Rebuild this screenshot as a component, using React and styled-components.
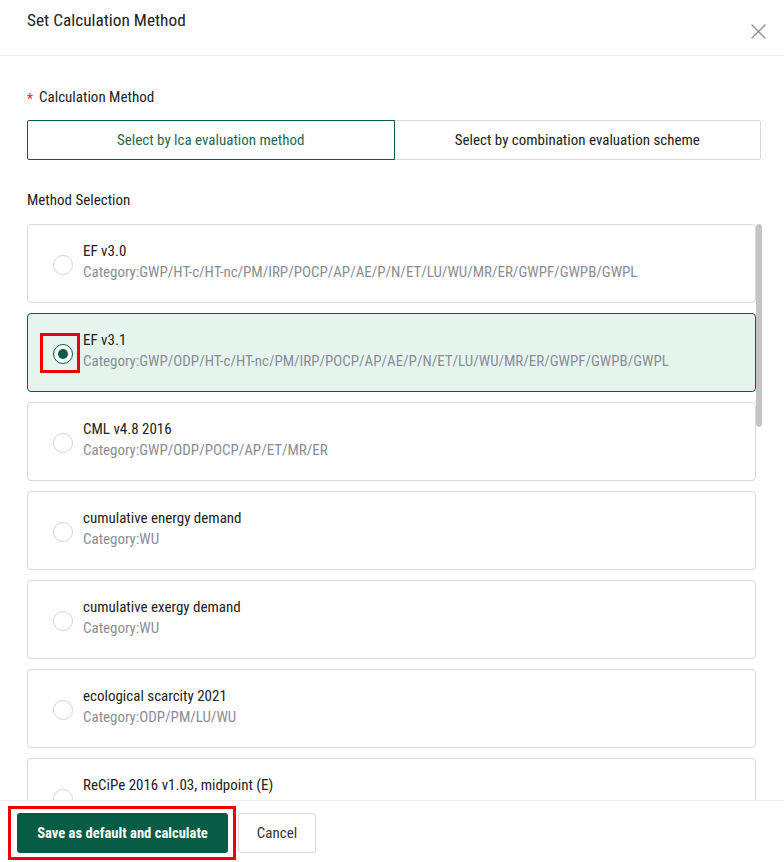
import React from "react";
import styled, { createGlobalStyle } from "styled-components";

const Global = createGlobalStyle`
  html, body { margin: 0; padding: 0; background: #fff; }
  body { font-family: "Roboto Condensed", Roboto, "Liberation Sans", sans-serif; font-stretch: 87.5%; color: #222; }
  * { box-sizing: border-box; }
`;

const Dialog = styled.div`
  width: 784px;
  height: 862px;
  display: flex;
  flex-direction: column;
  background: #fff;
  overflow: hidden;
`;

const Header = styled.div`
  height: 56px;
  flex: none;
  display: flex;
  align-items: flex-start;
  justify-content: space-between;
  padding: 8px 17px 0 27px;
  border-bottom: 1px solid #ececec;
`;

const Title = styled.h1`
  margin: 0;
  font-size: 17.3px;
  font-weight: 400;
  line-height: 24px;
  color: #222;
`;

const CloseBtn = styled.button`
  border: 0;
  background: none;
  padding: 0;
  margin-top: 14px;
  width: 18px;
  height: 18px;
  display: flex;
  align-items: center;
  justify-content: center;
  cursor: pointer;
`;

const Body = styled.div`
  flex: 1;
  min-height: 0;
  display: flex;
  flex-direction: column;
  padding: 30px 21px 0 27px;
`;

const Label = styled.div`
  font-size: 15px;
  line-height: 22px;
  display: flex;
  align-items: center;
  gap: 6px;
  color: #222;
`;

const Star = styled.span`
  color: #f5222d;
  font-size: 14px;
  line-height: 1;
  margin-top: 3px;
`;

const Tabs = styled.div`
  display: flex;
  margin-top: 12px;
  margin-right: 2px;
`;

const Tab = styled.button`
  flex: 1;
  height: 40px;
  padding-bottom: 2px;
  font-family: inherit;
  font-stretch: 87.5%;
  font-size: 15px;
  background: #fff;
  border: 1px solid ${p => (p.active ? "#0c5b44" : "#d9d9d9")};
  color: ${p => (p.active ? "#1e6b52" : "#222")};
  border-radius: ${p => (p.first ? "2px 0 0 2px" : "0 2px 2px 0")};
  margin-left: ${p => (p.first ? "0" : "-1px")};
  position: relative;
  z-index: ${p => (p.active ? 1 : 0)};
  cursor: pointer;
`;

const SectionLabel = styled.div`
  font-size: 15px;
  line-height: 22px;
  margin-top: 29px;
  margin-bottom: 13px;
  color: #222;
`;

const ListWrap = styled.div`
  position: relative;
  flex: 1;
  min-height: 0;
  display: flex;
`;

const List = styled.div`
  flex: 1;
  min-height: 0;
  overflow: hidden;
  display: flex;
  flex-direction: column;
  gap: 10px;
  padding-right: 7px;
`;

const Thumb = styled.div`
  position: absolute;
  top: 0;
  right: 1px;
  width: 6px;
  height: 203px;
  border-radius: 3px;
  background: #c4c4c7;
`;

const Card = styled.div`
  flex: none;
  display: flex;
  align-items: center;
  gap: 10px;
  padding: 15px 12px 19px 25px;
  border: 1px solid ${p => (p.selected ? "#0c5b44" : "#d9d9d9")};
  background: ${p => (p.selected ? "#e5f5ee" : "#fff")};
  border-radius: 4px;
  cursor: pointer;
`;

const RadioWrap = styled.div`
  position: relative;
  flex: none;
  width: 20px;
  height: 20px;
  margin-top: 6px;
`;

const RadioCircle = styled.span`
  display: flex;
  align-items: center;
  justify-content: center;
  width: 20px;
  height: 20px;
  border-radius: 50%;
  border: 1px solid ${p => (p.checked ? "#0c5b44" : "#d4d4d4")};
  background: #fff;
  &::after {
    content: "";
    display: ${p => (p.checked ? "block" : "none")};
    width: 10px;
    height: 10px;
    border-radius: 50%;
    background: #0c5b44;
  }
`;

const Highlight = styled.span`
  position: absolute;
  pointer-events: none;
  border: 3px solid #ee0000;
  left: ${p => p.l}px;
  top: ${p => p.t}px;
  right: ${p => p.r}px;
  bottom: ${p => p.b}px;
`;

const CardText = styled.div`
  display: flex;
  flex-direction: column;
  min-width: 0;
`;

const CardTitle = styled.div`
  font-size: 15px;
  line-height: 22px;
  color: #222;
`;

const CardCat = styled.div`
  font-size: 15px;
  line-height: 21px;
  color: #8a8d97;
  white-space: nowrap;
  letter-spacing: -0.03px;
`;

const Footer = styled.div`
  flex: none;
  height: 62px;
  border-top: 1px solid #ececec;
  display: flex;
  align-items: flex-start;
  gap: 10px;
  padding: 12px 17px 0;
`;

const PrimaryWrap = styled.div`
  position: relative;
`;

const Primary = styled.button`
  height: 40px;
  width: 211px;
  border: 0;
  border-radius: 3px;
  background: #075c45;
  color: #fff;
  font-family: inherit;
  font-stretch: 87.5%;
  font-size: 14.6px;
  font-weight: 700;
  cursor: pointer;
`;

const Secondary = styled.button`
  height: 40px;
  width: 78px;
  border: 1px solid #d9d9d9;
  border-radius: 3px;
  background: #fff;
  color: #333;
  font-family: inherit;
  font-stretch: 87.5%;
  font-size: 15px;
  cursor: pointer;
`;

const methods = [
  ["EF v3.0", "GWP/HT-c/HT-nc/PM/IRP/POCP/AP/AE/P/N/ET/LU/WU/MR/ER/GWPF/GWPB/GWPL"],
  ["EF v3.1", "GWP/ODP/HT-c/HT-nc/PM/IRP/POCP/AP/AE/P/N/ET/LU/WU/MR/ER/GWPF/GWPB/GWPL"],
  ["CML v4.8 2016", "GWP/ODP/POCP/AP/ET/MR/ER"],
  ["cumulative energy demand", "WU"],
  ["cumulative exergy demand", "WU"],
  ["ecological scarcity 2021", "ODP/PM/LU/WU"],
  ["ReCiPe 2016 v1.03, midpoint (E)", "GWP/ODP/HT-c/HT-nc/PM/IRP/POCP/AP/ET/LU/WU/MR/ER"],
  ["ReCiPe 2016 v1.03, midpoint (H)", "GWP/ODP/HT-c/HT-nc/PM/IRP/POCP/AP/ET/LU/WU/MR/ER"],
  ["ReCiPe 2016 v1.03, midpoint (I)", "GWP/ODP/HT-c/HT-nc/PM/IRP/POCP/AP/ET/LU/WU/MR/ER"],
];

const Close = () => (
  <svg width="15" height="15" viewBox="0 0 15 15" fill="none">
    <path d="M1 1L14 14M14 1L1 14" stroke="#8f8f8f" strokeWidth="1.4" strokeLinecap="round" />
  </svg>
);

export default function App() {
  const selected = 1;
  return (
    <Dialog>
      <Global />
      <Header>
        <Title>Set Calculation Method</Title>
        <CloseBtn aria-label="Close"><Close /></CloseBtn>
      </Header>
      <Body>
        <Label><Star>*</Star>Calculation Method</Label>
        <Tabs>
          <Tab first active>Select by lca evaluation method</Tab>
          <Tab>Select by combination evaluation scheme</Tab>
        </Tabs>
        <SectionLabel>Method Selection</SectionLabel>
        <ListWrap>
          <List>
            {methods.map(([name, cat], i) => (
              <Card key={name} selected={i === selected}>
                <RadioWrap>
                  <RadioCircle checked={i === selected} />
                  {i === selected && <Highlight l={-13} t={-11} r={-7} b={-9} />}
                </RadioWrap>
                <CardText>
                  <CardTitle>{name}</CardTitle>
                  <CardCat>Category:{cat}</CardCat>
                </CardText>
              </Card>
            ))}
          </List>
          <Thumb />
        </ListWrap>
      </Body>
      <Footer>
        <PrimaryWrap>
          <Primary>Save as default and calculate</Primary>
          <Highlight l={-9} t={-7} r={-8} b={-7} />
        </PrimaryWrap>
        <Secondary>Cancel</Secondary>
      </Footer>
    </Dialog>
  );
}
